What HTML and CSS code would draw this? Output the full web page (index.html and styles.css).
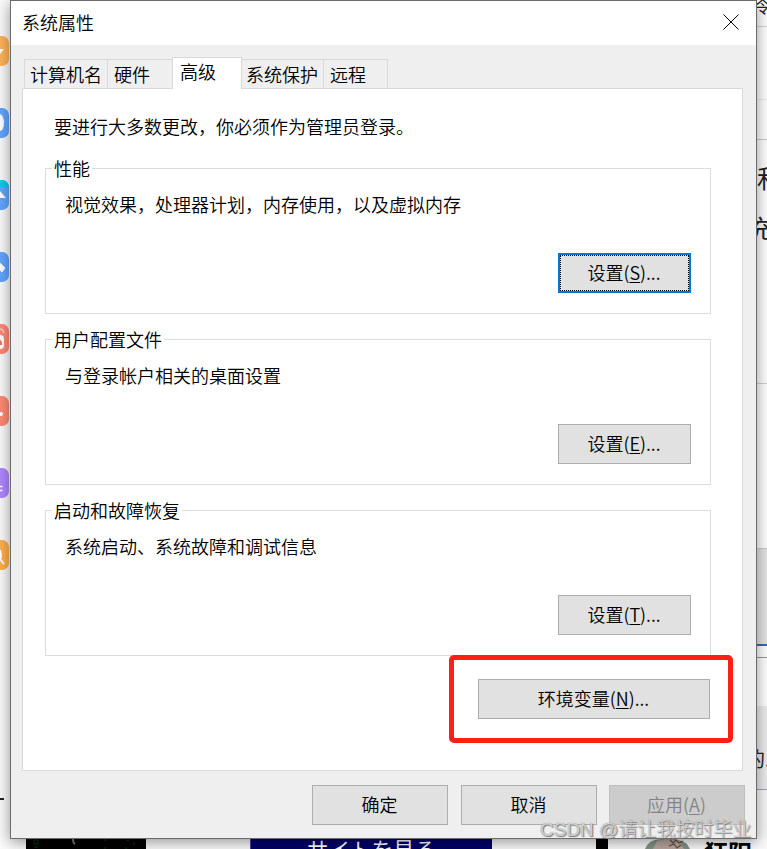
FILE: index.html
```html
<!DOCTYPE html>
<html lang="zh-CN">
<head>
<meta charset="utf-8">
<title>系统属性</title>
<link rel="stylesheet" href="styles.css">
</head>
<body>
<div class="desktop">
  <aside class="dock">
    <svg class="app orange" viewBox="0 0 9 30"><path d="M0 13h4L0 18z" fill="#fff"/></svg>
    <svg class="app blue" viewBox="0 0 9 30"><path d="M0 6Q4 8 4 15T0 23z" fill="#fff"/></svg>
    <svg class="app blue" viewBox="0 0 9 30"><path d="M0 0h3q5 1 6 7H0z" fill="#00cfec"/><path d="M0 11l6 7H0z" fill="#fff"/></svg>
    <svg class="app blue" viewBox="0 0 9 30"><path d="M0 11l5 5-3 4-2-2z" fill="#fff" stroke="#fff"/></svg>
    <svg class="app red" viewBox="0 0 9 30"><path d="M0 5q3 0 4 4" fill="none" stroke="#fbc9c0" stroke-width="1.3"/><path d="M0 11q4 0 4 4v7q0 3-4 3z" fill="#fff"/><path d="M0 16q2 0 2 5H0z" fill="#ee7763"/></svg>
    <svg class="app red" viewBox="0 0 9 30"><circle cx="1" cy="18" r="2" fill="#fff"/></svg>
    <svg class="app purple" viewBox="0 0 9 30"><path d="M0 18.500h2.500M0 22.500h2.500" stroke="#fff" stroke-width="1.500"/></svg>
    <svg class="app amber" viewBox="0 0 9 30"><path d="M0 10q2 7 0 9l4 5" fill="none" stroke="#fff" stroke-width="2"/></svg>
    <i class="dash"></i>
  </aside>

  <main class="dialog">
    <header class="titlebar">
      <h1>系统属性</h1>
      <svg class="close" viewBox="0 0 16 16"><path d="M.5.5l15 15M15.500.5l-15 15" fill="none" stroke="#000" stroke-width="1"/></svg>
    </header>
    <nav class="tabs">
      <span class="tab t1">计算机名</span><span class="tab t2">硬件</span><span class="tab active">高级</span><span class="tab t4">系统保护</span><span class="tab t5">远程</span>
    </nav>
    <section class="panel">
      <p class="note">要进行大多数更改，你必须作为管理员登录。</p>
      <section class="group">
        <h2>性能</h2>
        <p>视觉效果，处理器计划，内存使用，以及虚拟内存</p>
        <button class="btn focused">设置(<u>S</u>)...</button>
      </section>
      <section class="group">
        <h2>用户配置文件</h2>
        <p>与登录帐户相关的桌面设置</p>
        <button class="btn">设置(<u>E</u>)...</button>
      </section>
      <section class="group">
        <h2>启动和故障恢复</h2>
        <p>系统启动、系统故障和调试信息</p>
        <button class="btn">设置(<u>T</u>)...</button>
      </section>
      <div class="highlight"><button class="btn">环境变量(<u>N</u>)...</button></div>
    </section>
    <footer class="actions">
      <button class="btn">确定</button>
      <button class="btn">取消</button>
      <button class="btn disabled">应用(<u>A</u>)</button>
    </footer>
  </main>

  <aside class="page-edge">
    <div class="r1"><span>令</span></div>
    <div class="r2"></div>
    <div class="r3"></div>
    <div class="r4"><span class="c1">和</span><span class="c2">充</span></div>
    <div class="r5"></div>
    <div class="r6"></div>
    <div class="r7"></div>
    <div class="r8"></div>
    <div class="r9"><span>的.</span></div>
    <div class="r10"></div>
  </aside>

  <div class="below">
    <div class="matrix"><svg viewBox="0 0 120 10"><path d="M8 1v4h4V1zM8 8h4M78 1h3M100 2l4-1M108 3v3M78 9h2M100 8v2" fill="none" stroke="#063806"/><path d="M47 0q0 4 2 5" fill="none" stroke="#777" stroke-width="2"/></svg></div>
    <div class="banner"><span>サイトを見る</span></div>
    <i class="block"></i>
    <svg class="avatar" viewBox="0 0 45 10"><path d="M0 10Q4 0 16 0h14q12 2 15 10z" fill="#809486"/><path d="M8 10l4-8 8-2 14 1 5 9z" fill="#bba6a0"/><path d="M25 1l3 3 3-3 3 3 4-2M24 7l5-2 3 4 4-3" stroke="#62513c" stroke-width="1.200" fill="none"/></svg>
    <b><span>狂阳</span></b>
  </div>
  <div class="watermark">CSDN @请让我按时毕业</div>
</div>
</body>
</html>
```
FILE: styles.css
```css
* { box-sizing: border-box; }
body { margin: 0; overflow: hidden; }
.desktop {
  position: relative;
  display: grid;
  grid-template-columns: 10px 747px 10px;
  grid-template-rows: 839px 10px;
  width: 767px;
  height: 849px;
  overflow: hidden;
  background: #fbfbfb;
  color: #000;
  font: 350 18px/24px "Noto Sans CJK SC", sans-serif;
}
h1, h2, p { margin: 0; font: inherit; }

.dock { display: flex; flex-direction: column; gap: 42px; padding-top: 36px; overflow: hidden; }
.app { flex: none; width: 9px; height: 30px; border-radius: 0 7px 7px 0; }
.orange { background: #ffb45a; }
.blue { background: #62a6ff; }
.red { background: #ff8a76; }
.purple { background: #b088ff; }
.amber { background: #ffb04e; }
.dash { width: 4px; height: 2px; margin-top: 186px; background: #222; }

.dialog {
  position: relative;
  z-index: 1;
  display: flex;
  flex-direction: column;
  border: 1px solid #6b6b6b;
  background: #efefef;
  box-shadow: 0 3px 14px rgba(0, 0, 0, .42);
}
.titlebar {
  flex: none;
  display: flex;
  justify-content: space-between;
  height: 44px;
  padding: 9px 17px 0 11px;
  background: #fff;
}
.close { width: 16px; height: 16px; margin-top: 4px; }
.tabs { flex: none; display: flex; align-items: flex-end; height: 43px; padding-left: 13px; }
.tab {
  height: 29px;
  padding: 2px 0 0 6px;
  border: 1px solid #d9d9d9;
  border-width: 1px 1px 0 0;
  white-space: nowrap;
}
.t1 { width: 84px; border-left-width: 1px; padding-left: 5px; }
.t2 { width: 64px; border-right: 0; }
.active {
  position: relative;
  z-index: 1;
  width: 70px;
  height: 32px;
  margin-bottom: -1px;
  padding: 1px 0 0 7px;
  border-left-width: 1px;
  background: #fff;
}
.t4 { width: 82px; padding-left: 4px; }
.t5 { width: 64px; }
.panel {
  flex: none;
  display: flex;
  flex-direction: column;
  width: 721px;
  height: 683px;
  margin-left: 11px;
  padding: 25px 31px 0 22px;
  border: 1px solid #d9d9d9;
  background: #fff;
}
.note { height: 54px; padding-left: 9px; }
.group {
  flex: none;
  display: flex;
  flex-direction: column;
  width: 666px;
  height: 146px;
  margin-bottom: 25px;
  border: 1px solid #dcdcdc;
}
.group h2 {
  align-self: flex-start;
  height: 24px;
  margin: -13px 0 0 6px;
  padding: 0 2px;
  background: #fff;
}
.group p { height: 61px; padding: 12px 0 0 19px; }
.group .btn { align-self: flex-end; width: 133px; margin: 12px 19px 0 0; }
.btn {
  flex: none;
  height: 40px;
  padding: 0 1px 2px 0;
  border: 1px solid #adadad;
  border-radius: 0;
  background: #e1e1e1;
  color: #000;
  font: inherit;
}
.btn u { text-decoration-thickness: 1px; text-underline-offset: 2px; }
.focused { border: 2px solid #0078d7; outline: 1px dotted #000; outline-offset: -3px; }
.highlight {
  flex: none;
  width: 284px;
  height: 88px;
  margin: -26px 0 0 404px;
  padding: 19px 0 0 24px;
  border: 5px solid #ff2013;
  border-radius: 5px;
}
.highlight .btn { width: 232px; }
.actions { display: flex; justify-content: flex-end; gap: 13px; padding: 14px 11px 0 0; }
.actions .btn { width: 136px; }
.actions .disabled { margin-left: -1px; border-color: #bfbfbf; background: #ccc; color: #838383; }

.page-edge { display: flex; flex-direction: column; overflow: hidden; background: #fff; }
.page-edge > div { flex: none; overflow: hidden; }
.page-edge span { display: block; color: #222; font-weight: 400; white-space: nowrap; }
.r1 { height: 27px; border-bottom: 1px solid #d8d8d8; }
.r1 span { margin: -6px 0 0 -3px; font-size: 17px; }
.r2 { height: 72px; }
.r3 { height: 41px; border-top: 1px solid #eee; border-bottom: 1px solid #ccc; }
.r4 { height: 244px; border-bottom: 1px solid #d4d4d4; }
.r4 span { font-size: 25px; line-height: 30px; }
.c1 { margin: 22px 0 0 0; }
.c2 { margin: 20px 0 0 -9px; }
.r5 { height: 165px; border-bottom: 1px solid #ccc; }
.r6 { height: 97px; border-bottom: 2px solid #3d68b4; background: #e4e4e4; }
.r7 { height: 12px; border-bottom: 1px solid #999; }
.r8 { height: 48px; }
.r9 { height: 84px; border-bottom: 1px solid #9ca4ba; background: #ececec; }
.r9 span { margin: 41px 0 0 -12px; font-size: 20px; }
.r10 { height: 49px; background: #f8f8f8; }

.below { grid-column: 1 / -1; display: flex; overflow: hidden; }
.matrix { width: 120px; margin-left: 26px; background: #000; }
.matrix svg { display: block; width: 120px; height: 10px; }
.banner { width: 242px; margin-left: 104px; border-left: 1px solid #44a; background: #00006c; color: #fff; overflow: hidden; }
.banner span { display: block; margin: -1px 0 0 56px; font-size: 21.5px; font-weight: 400; line-height: 22px; white-space: nowrap; }
.block { width: 12px; margin-left: 104px; background: #000; }
.avatar { width: 45px; height: 10px; margin-left: 37px; }
.below b { margin-left: 14px; font-size: 24px; font-weight: 700; line-height: 24px; }
.below b span { display: block; margin-top: 1px; }
.watermark {
  position: absolute;
  z-index: 2;
  left: 540px;
  top: 818px;
  color: rgba(236, 236, 236, .75);
  font: 300 19px/24px "Liberation Sans", "Noto Sans CJK SC", sans-serif;
  text-shadow: 1px 1px 1px #777, 0 0 1px #777;
  white-space: nowrap;
}
```
